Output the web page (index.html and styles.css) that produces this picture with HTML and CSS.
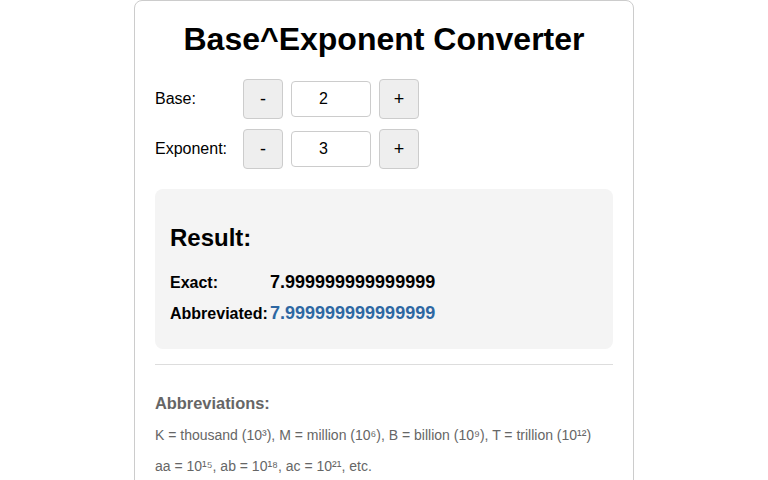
FILE: index.html
```html
<!DOCTYPE html>
<html>
<head>
<meta charset="utf-8">
<link rel="stylesheet" href="styles.css">
</head>
<body>
<div class="card">
  <h1 class="title">Base^Exponent Converter</h1>
  <div class="row">
    <label class="lbl">Base:</label>
    <button class="btn">-</button>
    <input class="num" type="number" value="2">
    <button class="btn">+</button>
  </div>
  <div class="row">
    <label class="lbl">Exponent:</label>
    <button class="btn">-</button>
    <input class="num" type="number" value="3">
    <button class="btn">+</button>
  </div>
  <div class="result">
    <h2 class="result-title">Result:</h2>
    <div class="res-row">
      <span class="res-lbl">Exact:</span>
      <span class="res-val">7.999999999999999</span>
    </div>
    <div class="res-row">
      <span class="res-lbl">Abbreviated:</span>
      <span class="res-val blue">7.999999999999999</span>
    </div>
  </div>
  <hr class="sep">
  <div class="abbr">
    <h3 class="abbr-title">Abbreviations:</h3>
    <p class="abbr-line">K = thousand (10³), M = million (10⁶), B = billion (10⁹), T = trillion (10¹²)</p>
    <p class="abbr-line">aa = 10¹⁵, ab = 10¹⁸, ac = 10²¹, etc.</p>
  </div>
</div>
</body>
</html>
```
FILE: styles.css
```css
html, body {
  margin: 0;
  padding: 0;
  background: #fff;
}
body {
  font-family: "Liberation Sans", "DejaVu Sans", Arial, sans-serif;
  color: #000;
}
.card {
  box-sizing: border-box;
  width: 500px;
  margin: 0 auto;
  border: 1px solid #ccc;
  border-radius: 8px;
  padding: 20px;
  padding-top: 0;
  margin-top: 0;
}
.title {
  font-size: 32px;
  font-weight: bold;
  text-align: center;
  margin: 20px 0 21px;
  line-height: 37px;
}
.row {
  display: flex;
  align-items: center;
  gap: 8px;
  margin-bottom: 10px;
  height: 40px;
}
.lbl {
  width: 80px;
  font-size: 16px;
}
.btn {
  box-sizing: border-box;
  width: 40px;
  height: 40px;
  border: 1px solid #ccc;
  border-radius: 4px;
  background: #eee;
  font-family: "Liberation Sans", Arial, sans-serif;
  font-size: 18px;
  color: #000;
  padding: 0;
}
.num {
  box-sizing: border-box;
  width: 80px;
  height: 36px;
  border: 1px solid #ccc;
  border-radius: 4px;
  text-align: center;
  font-family: "Liberation Sans", Arial, sans-serif;
  font-size: 16px;
  color: #000;
  padding: 0 2px;
}
.result {
  margin-top: 20px;
  background: #f4f4f4;
  border-radius: 8px;
  padding: 15px;
}
.result-title {
  font-size: 24px;
  font-weight: bold;
  margin: 20px 0 20px;
  line-height: 28px;
}
.res-row {
  display: flex;
  align-items: baseline;
  margin-bottom: 10px;
  line-height: 21px;
}
.res-lbl {
  width: 100px;
  font-size: 16px;
  font-weight: bold;
}
.res-val {
  font-size: 18px;
  font-weight: bold;
}
.blue {
  color: #2d67a2;
}
.sep {
  border: 0;
  border-top: 1px solid #ddd;
  margin: 15px 0 0;
}
.abbr {
  color: #666;
}
.abbr-title {
  font-size: 16.4px;
  font-weight: bold;
  margin: 28px 0 0;
  line-height: 20px;
}
.abbr-line {
  font-size: 14px;
  margin: 14px 0 0;
  line-height: 17px;
}
```
